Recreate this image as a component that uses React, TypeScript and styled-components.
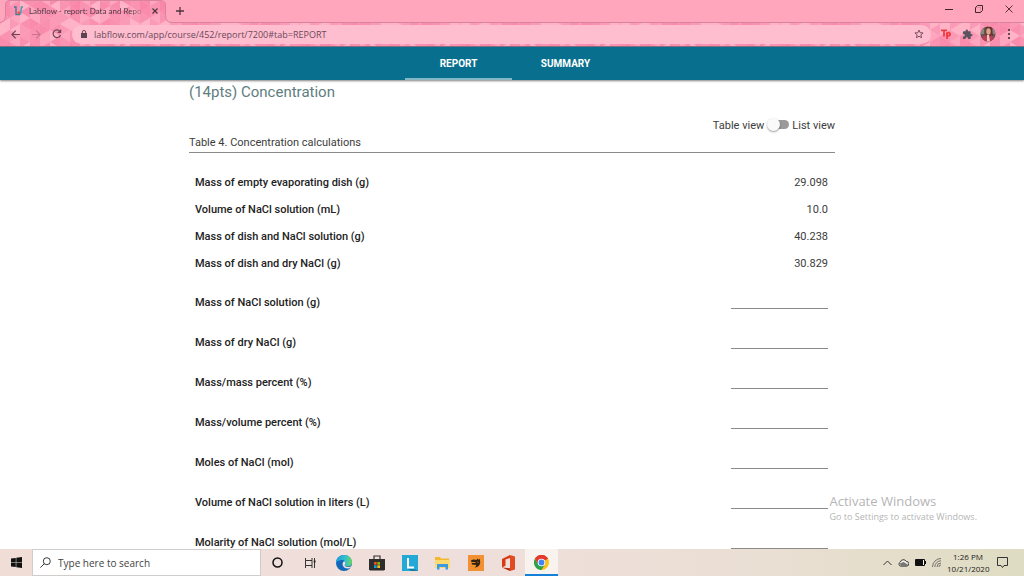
import React from 'react';
import styled, { createGlobalStyle } from 'styled-components';

const GlobalStyle = createGlobalStyle`
  * { box-sizing: border-box; }
  body { margin: 0; overflow: hidden; background: #fff; }
  button, input { font: inherit; color: inherit; margin: 0; padding: 0; border: 0; background: none; outline: 0; border-radius: 0; }
  svg { display: block; flex: none; }
`;

const uiFont = '"Open Sans", "Noto Sans", sans-serif';

const Screen = styled.div`
  display: flex;
  flex-direction: column;
  height: 100vh;
  color: #3c3c3c;
  font-family: Roboto, sans-serif;
  font-size: 11px;
`;

/* ---------- Browser window ---------- */

const Chrome = styled.header`
  position: relative;
  flex: none;
  background: #ffa5bc;
  border-bottom: 1px solid #8b6f86;
  font-family: ${uiFont};
`;

const ThemeArt = styled.svg`
  position: absolute;
  inset: 0;
  width: 100%;
  height: 100%;
`;

const TabStrip = styled.div`
  position: relative;
  display: flex;
  align-items: center;
  height: 22px;
  padding: 0 11px 0 14px;
`;

const PageTab = styled.div`
  display: flex;
  align-items: center;
  width: 146px;
  gap: 6px;
  font-family: Lato, sans-serif;
  font-size: 8px;
  color: #4f3a46;
`;

const TabTitle = styled.span`
  flex: 1;
  white-space: nowrap;
  mask-image: linear-gradient(90deg, #000 88%, rgba(0, 0, 0, 0.2));
`;

const IconButton = styled.button<{ $w?: number }>`
  display: flex;
  flex: none;
  align-items: center;
  justify-content: center;
  width: ${(p) => p.$w ?? 16}px;
  height: 16px;
`;

const WindowButtons = styled.div`
  display: flex;
  gap: 14px;
  margin-left: auto;
  margin-right: -4px;
  height: 20px;
`;

const NavBar = styled.div`
  position: relative;
  display: flex;
  align-items: center;
  height: 24px;
  padding: 0 7px;
`;

const NavButtons = styled.div`
  display: flex;
  gap: 5px;
  padding-right: 7px;
`;

const AddressBar = styled.label`
  display: flex;
  flex: 1;
  align-items: center;
  gap: 7px;
  height: 19px;
  padding: 0 4px 0 9px;
  border-radius: 10px;
  background: #ffbdd0;
  color: #6a4a58;
  font-size: 9px;
`;

const AddressInput = styled.input`
  flex: 1;
  min-width: 0;
`;

const Extensions = styled.div`
  display: flex;
  gap: 5px;
  padding-left: 7px;
`;

/* ---------- Labflow page ---------- */

const AppBar = styled.nav`
  position: relative;
  display: flex;
  flex: none;
  justify-content: center;
  height: 33px;
  background: #08708e;
  box-shadow: 0 1px 2px rgba(0, 0, 0, 0.5);
`;

const AppTab = styled.a<{ $active?: boolean }>`
  display: flex;
  align-items: center;
  justify-content: center;
  width: 107px;
  padding-top: 1px;
  border-bottom: 2px solid ${(p) => (p.$active ? '#83b8c7' : 'transparent')};
  color: #fff;
  font-size: 10px;
  font-weight: 700;
  text-decoration: none;
`;

const Page = styled.main`
  flex: 1;
  min-height: 0;
  overflow: hidden;
`;

const Report = styled.section`
  width: 100%;
  max-width: 646px;
  margin: 0 auto;
  padding-top: 1px;
`;

const Heading = styled.h2`
  margin: 0;
  color: #607d80;
  font-size: 15px;
  font-weight: 400;
  line-height: 22px;
`;

const ViewToggle = styled.div`
  display: flex;
  align-items: center;
  justify-content: flex-end;
  gap: 3px;
  height: 16px;
  margin-top: 14px;
`;

const Switch = styled.input`
  position: relative;
  appearance: none;
  width: 22px;
  height: 14px;
  &::before {
    content: '';
    position: absolute;
    inset: 2px 0 3px 4px;
    border-radius: 5px;
    background: #9a9a9a;
  }
  &::after {
    content: '';
    position: absolute;
    left: 0;
    top: 0;
    width: 13px;
    height: 13px;
    border-radius: 50%;
    background: #fafafa;
    box-shadow: 0 1px 2px rgba(0, 0, 0, 0.4);
  }
`;

const DataTable = styled.table`
  width: 100%;
  border-collapse: separate;
  border-spacing: 0;
`;

const Caption = styled.caption`
  margin-bottom: 16px;
  padding-top: 1px;
  border-bottom: 1px solid #8a8a8a;
  line-height: 18px;
  text-align: left;
`;

const Row = styled.tr<{ $entry?: boolean }>`
  height: ${(p) => (p.$entry ? 40 : 27)}px;
  & > * {
    padding: ${(p) => (p.$entry ? 10 : 0)}px 7px 0 6px;
    vertical-align: middle;
  }
`;

const RowLabel = styled.th`
  color: #222;
  font-weight: 500;
  text-align: left;
`;

const RowValue = styled.td`
  text-align: right;
`;

const AnswerInput = styled.input`
  display: block;
  width: 97px;
  height: 14px;
  margin-left: auto;
  border-bottom: 1px solid #8a8a8a;
`;

/* ---------- Desktop ---------- */

const Watermark = styled.aside`
  position: absolute;
  right: 47px;
  bottom: 52px;
  color: #b5b5b5;
  font-family: ${uiFont};
  font-size: 9px;
  line-height: 14px;
  pointer-events: none;
`;

const WatermarkTitle = styled.div`
  font-size: 13px;
  line-height: 18px;
`;

const Taskbar = styled.footer`
  display: flex;
  flex: none;
  height: 27px;
  background: linear-gradient(90deg, #f0ded6, #efdfdc 45%, #eadfd3 75%, #dedcc2);
  color: #222;
  font-family: ${uiFont};
`;

const TaskButton = styled.button<{ $active?: boolean; $w?: number }>`
  display: flex;
  align-items: center;
  justify-content: center;
  width: ${(p) => p.$w ?? 33}px;
  background: ${(p) => (p.$active ? '#f8f3ef' : 'none')};
  border-bottom: 2px solid ${(p) => (p.$active ? '#1580d8' : 'transparent')};
  border-top: 2px solid transparent;
`;

const SearchBox = styled.label`
  display: flex;
  align-items: center;
  gap: 7px;
  width: 229px;
  padding-left: 7px;
  border: 1px solid #d0cccb;
  background: #fff;
  font-size: 10px;
`;

const SearchInput = styled.input`
  flex: 1;
  min-width: 0;
  &::placeholder { color: #3f3f3f; opacity: 1; }
`;

const Tray = styled.div`
  display: flex;
  align-items: center;
  gap: 6px;
  margin-left: auto;
  padding-right: 16px;
`;

const Clock = styled.time`
  width: 42px;
  font-size: 8px;
  line-height: 12px;
  text-align: center;
  white-space: nowrap;
`;

const NotificationButton = styled(IconButton)`
  margin-left: 2px;
`;

const shades = ['#f987aa', '#fa90b0', '#fb9ab7', '#f98cad', '#fda6be', '#fa93b2', '#ffb3c6'];

function Triangles() {
  const items: React.ReactNode[] = [];
  for (let c = 0; c < 16; c++) {
    for (let r = -1; r < 9; r++) {
      const x = c * 10;
      const y = r * 6;
      const right = (c + r) % 2 === 0;
      const shade = shades[(c * c * 5 + r * r * 3 + c * r * 11 + 77) % 7];
      items.push(
        <path
          key={`${c}.${r}`}
          fill={shade}
          d={right ? `M${x} ${y}v12l10-6z` : `M${x + 10} ${y}v12l-10-6z`}
        />,
      );
    }
  }
  return <>{items}</>;
}

const entered = [
  ['Mass of empty evaporating dish (g)', '29.098'],
  ['Volume of NaCl solution (mL)', '10.0'],
  ['Mass of dish and NaCl solution (g)', '40.238'],
  ['Mass of dish and dry NaCl (g)', '30.829'],
];

const questions = [
  'Mass of NaCl solution (g)',
  'Mass of dry NaCl (g)',
  'Mass/mass percent (%)',
  'Mass/volume percent (%)',
  'Moles of NaCl (mol)',
  'Volume of NaCl solution in liters (L)',
  'Molarity of NaCl solution (mol/L)',
];

function BrowserChrome() {
  return (
    <Chrome>
      <ThemeArt aria-hidden="true">
        <defs>
          <pattern id="tri" width="160" height="48" patternUnits="userSpaceOnUse">
            <Triangles />
          </pattern>
        </defs>
        <path
          d="M-2 22.500Q5.500 22.500 5.500 16V5Q5.500.5 10 .5H160Q165.500.5 165.500 5V16Q165.500 22.500 172 22.500H5000V50H-2z"
          fill="url(#tri)"
          stroke="#d9849f"
        />
      </ThemeArt>
      <TabStrip>
        <PageTab>
          <svg width="9" height="10" viewBox="0 0 9 10" fill="none">
            <path d="M0 1h2v7.500h4" stroke="#467b93" strokeWidth="1.400" />
            <path d="M9 1H7.500L6.500 8.500" stroke="#4b9bb2" strokeWidth="1.500" />
            <path d="M3.500 5.500h2.500V8H3.500z" fill="#e8564d" />
          </svg>
          <TabTitle>Labflow - report: Data and Repo</TabTitle>
          <IconButton aria-label="Close tab" $w={10}>
            <svg width="6" height="6" viewBox="0 0 6 6" stroke="#4d3540" strokeWidth="1.200"><path d="M.5.5l5 5M5.500.5l-5 5" /></svg>
          </IconButton>
        </PageTab>
        <IconButton aria-label="New tab" $w={40}>
          <svg width="8" height="8" viewBox="0 0 8 8" stroke="#4d3540" strokeWidth="1.300"><path d="M4 0v8M0 4h8" /></svg>
        </IconButton>
        <WindowButtons>
          <IconButton aria-label="Minimize"><svg width="8" height="8" viewBox="0 0 8 8" stroke="#40252f"><path d="M0 4.500h8" /></svg></IconButton>
          <IconButton aria-label="Restore">
            <svg width="8" height="8" viewBox="0 0 8 8" fill="none" stroke="#40252f"><path d="M.5 2.500L2.500.5h5v5l-2 2h-5z" /><path d="M.5 2.500h5v5" opacity=".2" /></svg>
          </IconButton>
          <IconButton aria-label="Close"><svg width="8" height="8" viewBox="0 0 8 8" stroke="#40252f" strokeWidth=".9"><path d="M.5.5l7 7M7.500.5l-7 7" /></svg></IconButton>
        </WindowButtons>
      </TabStrip>
      <NavBar>
        <NavButtons>
          <IconButton aria-label="Back"><svg width="9" height="9" viewBox="0 0 9 9" fill="none" stroke="#6b4656" strokeWidth="1.200"><path d="M9 4.500H1M4.700.7L.9 4.500l3.800 3.800" /></svg></IconButton>
          <IconButton aria-label="Forward"><svg width="9" height="9" viewBox="0 0 9 9" fill="none" stroke="#c9748f" strokeWidth="1.100"><path d="M0 4.500h8M4.300.7l3.800 3.800-3.800 3.800" /></svg></IconButton>
          <IconButton aria-label="Reload"><svg width="10" height="10" viewBox="0 0 10 10" fill="none" stroke="#6b4656" strokeWidth="1.200"><path d="M8.500 6A3.800 3.800 0 1 1 7.800 2.300" /><path d="M9.200 0v4H5.200z" fill="#6b4656" stroke="none" /></svg></IconButton>
        </NavButtons>
        <AddressBar>
          <svg width="6" height="8" viewBox="0 0 6 8"><path d="M0 3h6v5H0z" fill="#5d4350" /><path d="M1.400 3V2a1.600 1.600 0 0 1 3.200 0v1" fill="none" stroke="#5d4350" strokeWidth=".9" /></svg>
          <AddressInput aria-label="Address" defaultValue="labflow.com/app/course/452/report/7200#tab=REPORT" />
          <IconButton aria-label="Bookmark"><svg width="10" height="10" viewBox="0 0 24 24" fill="none" stroke="#6b4656" strokeWidth="2.200"><path d="M12 2.500l2.800 6.400 7 .6-5.300 4.600 1.600 6.900-6.100-3.700L5.900 21l1.600-6.900L2.200 9.500l7-.6z" /></svg></IconButton>
        </AddressBar>
        <Extensions>
          <IconButton aria-label="Teachers Pay Teachers">
            <svg width="10" height="10" viewBox="0 0 10 10" fill="none" stroke="#f23b3f" strokeWidth="1.800"><path d="M0 1.400h6M3 1v6.500" /><path d="M6 3.500V10" /><circle cx="7.500" cy="5.300" r="1.600" /></svg>
          </IconButton>
          <IconButton aria-label="Extensions">
            <svg width="11" height="11" viewBox="0 0 24 24" fill="#5c5560"><path d="M20.500 11H19V7a2 2 0 0 0-2-2h-4V3.500a2.500 2.500 0 0 0-5 0V5H4a2 2 0 0 0-2 2v3.800h1.500a2.700 2.700 0 0 1 0 5.400H2V20a2 2 0 0 0 2 2h3.800v-1.500a2.700 2.700 0 0 1 5.400 0V22H17a2 2 0 0 0 2-2v-4h1.500a2.500 2.500 0 0 0 0-5z" /></svg>
          </IconButton>
          <IconButton aria-label="Profile">
            <svg width="16" height="16" viewBox="0 0 16 16">
              <clipPath id="face"><circle cx="8" cy="8" r="7.500" /></clipPath>
              <g clipPath="url(#face)">
                <path d="M0 0h16v16H0z" fill="#625953" />
                <path d="M0 3h4v5H0zM12 3h4v5h-4z" fill="#8f8580" />
                <path d="M6 1h6l1 9H5z" fill="#6b332b" />
                <ellipse cx="8.500" cy="5.500" rx="2.200" ry="3.200" fill="#dba68f" />
                <path d="M1 16l2-6 4-1 2 2 3-2 3 7z" fill="#b93f59" />
                <path d="M7 9h2l1 7H7z" fill="#f0c7bd" />
              </g>
            </svg>
          </IconButton>
          <IconButton aria-label="Menu"><svg width="2" height="10" viewBox="0 0 2 10" fill="#6b4656"><path d="M0 0h2v2H0zM0 4h2v2H0zM0 8h2v2H0z" /></svg></IconButton>
        </Extensions>
      </NavBar>
    </Chrome>
  );
}

function DesktopTaskbar() {
  return (
    <Taskbar>
      <TaskButton aria-label="Start" $w={32}>
        <svg width="11" height="11" viewBox="0 0 11 11" fill="#111"><path d="M0 1.600l4.800-.7v4.300H0zM5.300.8L11 0v5.200H5.300zM0 5.700h4.800V10L0 9.400zM5.300 5.700H11V11l-5.700-.8z" /></svg>
      </TaskButton>
      <SearchBox>
        <svg width="11" height="11" viewBox="0 0 11 11" fill="none" stroke="#222" strokeWidth=".9"><circle cx="6.800" cy="4.200" r="3.500" /><path d="M4.300 6.700L.4 10.600" /></svg>
        <SearchInput aria-label="Search" placeholder="Type here to search" />
      </SearchBox>
      <TaskButton aria-label="Cortana"><svg width="11" height="11" viewBox="0 0 11 11"><circle cx="5.500" cy="5.500" r="4.500" fill="none" stroke="#111" strokeWidth="1.500" /></svg></TaskButton>
      <TaskButton aria-label="Task view">
        <svg width="11" height="10" viewBox="0 0 11 10" fill="none" stroke="#222" strokeWidth=".9"><path d="M.5 0v2.500h6.500V0M.5 10V7.500h6.500V10M.5 2.500v5M7 2.500v5M9.500 0v10" /><path d="M8.700 2.500h1.800v2H8.700z" fill="#222" stroke="none" /></svg>
      </TaskButton>
      <TaskButton aria-label="Edge">
        <svg width="16" height="16" viewBox="0 0 16 16">
          <defs><linearGradient id="edge"><stop offset="0" stopColor="#1b9de2" /><stop offset=".6" stopColor="#35c1c9" /><stop offset="1" stopColor="#6ada5c" /></linearGradient></defs>
          <circle cx="8" cy="8" r="8" fill="#1268b8" />
          <path d="M0 8C0 3 4 0 8 0c5 0 8 3.500 8 7 0 3-2 4.500-5 4.500-2 0-2.500-1-1.800-2C10 7 8.500 5 6 5 3 5 .7 6.500 0 8z" fill="url(#edge)" />
          <path d="M16 10.500c-2 2-5.500 2-7 .5-.8-.8 0-1.500.2-2 .6-1.300 0-2.300-1-2.800-2.500 1-2.700 7 3.800 7.300 1.800 0 3-1 4-3z" fill="#f0dfdb" />
        </svg>
      </TaskButton>
      <TaskButton aria-label="Store">
        <svg width="16" height="16" viewBox="0 0 16 16"><path d="M5 5V1h6v4" fill="none" stroke="#333" strokeWidth="1.200" /><path d="M0 4h16v10.500l-1 1H1l-1-1z" fill="#2d2d2d" /><path d="M5 7h2.700v2.700H5z" fill="#f05021" /><path d="M8.300 7H11v2.700H8.300z" fill="#80bb03" /><path d="M5 10.300h2.700V13H5z" fill="#04a5ef" /><path d="M8.300 10.300H11V13H8.300z" fill="#feb902" /></svg>
      </TaskButton>
      <TaskButton aria-label="Lexia">
        <svg width="16" height="16" viewBox="0 0 16 16"><path d="M0 0h16v16H0z" fill="#24a9d6" /><path d="M6 3v9.500h6" fill="none" stroke="#fff" strokeWidth="2" /><path d="M6 14h6l4 2H9z" fill="#147ba2" /></svg>
      </TaskButton>
      <TaskButton aria-label="File Explorer">
        <svg width="15" height="14" viewBox="0 0 15 14"><path d="M0 1h5l1 1.500h8V12H0z" fill="#f0b92f" /><path d="M0 4h15v8H0z" fill="#fddb70" /><path d="M2 13.500V8h11v5.500h-2.500V11h-6v2.500z" fill="#3c9be0" /></svg>
      </TaskButton>
      <TaskButton aria-label="Audio tool">
        <svg width="16" height="16" viewBox="0 0 16 16"><path d="M0 0h16v16H0z" fill="#f29132" /><path d="M3 5.500C5 4 7 4.500 8.500 5L9.500 3.500l1 1.200L12 4v2c.8 2.500-.5 6-5.500 6.500C8 11.500 8.500 10.500 8 10L4 9.500z" fill="#33200e" /><path d="M3 7.500h4.500M9.500 7l1 .5" stroke="#f29132" strokeWidth=".9" /></svg>
      </TaskButton>
      <TaskButton aria-label="Office">
        <svg width="13" height="16" viewBox="0 0 13 16"><path d="M0 4l8-4v3L3.500 4.500v6.300L0 12.500z" fill="#d83b11" /><path d="M0 12.500l8 .8V16z" fill="#b52a12" /><path d="M8 0l5 1.500v13L8 16z" fill="#e24a22" /></svg>
      </TaskButton>
      <TaskButton aria-label="Chrome" $active>
        <svg width="15" height="15" viewBox="0 0 16 16"><circle cx="8" cy="8" r="8" fill="#fbc116" /><path d="M8 8L1.070 4A8 8 0 0 1 14.930 4z" fill="#e33b2e" /><path d="M8 4h6.930A8 8 0 0 0 1.070 4L4.500 10z" fill="#e33b2e" /><path d="M1.070 4A8 8 0 0 0 8 16l3.500-6h-7z" fill="#2ba24c" /><circle cx="8" cy="8" r="4" fill="#fff" /><circle cx="8" cy="8" r="3.100" fill="#4285f4" /></svg>
      </TaskButton>
      <Tray>
        <svg width="9" height="6" viewBox="0 0 9 6" fill="none" stroke="#333"><path d="M.5 5l4-4 4 4" /></svg>
        <svg width="11" height="9" viewBox="0 0 12 9"><path d="M3 8.500a2.300 2.300 0 0 1-.5-4.400A3.500 3.500 0 0 1 9 3.300a2.600 2.600 0 0 1 .3 5.200z" fill="#f1ece6" stroke="#222" strokeWidth=".9" /><path d="M2 5.500l4-1.500 5 3-1.500 1.500H3z" fill="#777" /></svg>
        <svg width="11" height="7" viewBox="0 0 11 7"><path d="M.5.500h9v6h-9z" fill="#fff" stroke="#111" /><path d="M1 1h7v5H1zM10 2h1v3h-1z" fill="#111" /></svg>
        <svg width="9" height="9" viewBox="0 0 9 9" fill="none" stroke="#555" strokeWidth=".8"><path d="M.5 9A8.500 8.500 0 0 1 9 .5M2.800 9A6.200 6.200 0 0 1 9 2.800M5 9a4 4 0 0 1 4-4M7 9a2 2 0 0 1 2-2" /></svg>
        <Clock>1:26 PM<br />10/21/2020</Clock>
        <NotificationButton aria-label="Notifications" $w={11}>
          <svg width="11" height="11" viewBox="0 0 11 11" fill="none" stroke="#333"><path d="M.5.500h10v8H7l-1.500 2L4 8.500H.5z" /></svg>
        </NotificationButton>
      </Tray>
    </Taskbar>
  );
}

export default function App() {
  return (
    <Screen>
      <GlobalStyle />
      <BrowserChrome />
      <AppBar>
        <AppTab href="#report" $active>REPORT</AppTab>
        <AppTab href="#summary">SUMMARY</AppTab>
      </AppBar>
      <Page>
        <Report>
          <Heading>(14pts) Concentration</Heading>
          <ViewToggle>
            <span>Table view</span>
            <Switch type="checkbox" role="switch" id="view" />
            <label htmlFor="view">List view</label>
          </ViewToggle>
          <DataTable>
            <Caption>Table 4. Concentration calculations</Caption>
            <tbody>
              {entered.map(([label, value]) => (
                <Row key={label}>
                  <RowLabel scope="row">{label}</RowLabel>
                  <RowValue>{value}</RowValue>
                </Row>
              ))}
              {questions.map((label, i) => (
                <Row key={label} $entry>
                  <RowLabel scope="row"><label htmlFor={`q${i}`}>{label}</label></RowLabel>
                  <RowValue><AnswerInput id={`q${i}`} /></RowValue>
                </Row>
              ))}
            </tbody>
          </DataTable>
        </Report>
      </Page>
      <Watermark>
        <WatermarkTitle>Activate Windows</WatermarkTitle>
        Go to Settings to activate Windows.
      </Watermark>
      <DesktopTaskbar />
    </Screen>
  );
}
